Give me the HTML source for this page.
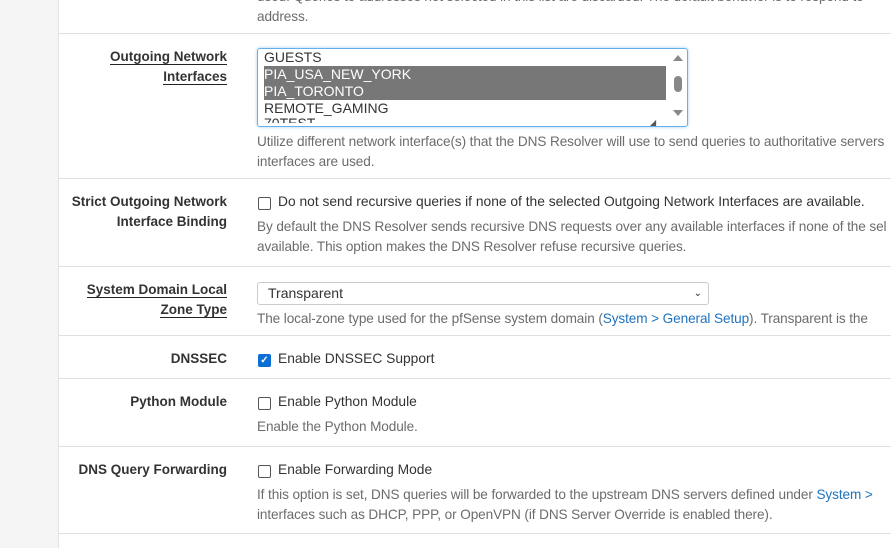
<!DOCTYPE html>
<html><head><meta charset="utf-8"><style>
body{margin:0;width:891px;height:548px;overflow:hidden;background:#fff;font-family:"Liberation Sans",sans-serif;position:relative}
.side{position:absolute;left:0;top:0;width:58px;height:548px;background:#f5f5f5;border-right:1px solid #e2e2e2}
.hr{position:absolute;left:59px;right:0;height:1px;background:#e0e0e0}
.lbl{position:absolute;right:664px;text-align:right;font-size:13.5px;font-weight:bold;color:#333;line-height:20px;white-space:nowrap}
.lbl u{text-decoration:none;border-bottom:1px solid #222}
.t{position:absolute;left:257px;font-size:13.6px;color:#6c6c6c;line-height:20px;white-space:nowrap;letter-spacing:-0.1px}
.c{position:absolute;left:278px;font-size:13.8px;color:#333;line-height:20px;white-space:nowrap}
.cb{position:absolute;left:258px;width:11px;height:11px;border:1px solid #555;border-radius:2px;background:#fff}
a{color:#1e73be;text-decoration:none}
</style></head><body>
<div class="side"></div>
<div class="t" style="top:-13px">used. Queries to addresses not selected in this list are discarded. The default behavior is to respond to</div>
<div class="t" style="top:7px">address.</div>
<div class="hr" style="top:33px"></div>

<div class="lbl" style="top:47px"><u>Outgoing Network</u></div>
<div class="lbl" style="top:67px"><u>Interfaces</u></div>
<div style="position:absolute;left:257px;top:48px;width:429px;height:77px;border:1px solid #66afe9;border-radius:3px;box-shadow:0 0 3px rgba(102,175,233,.6);overflow:hidden;font-size:14px;color:#333;line-height:17px">
<div style="position:absolute;left:6px;top:0">GUESTS</div>
<div style="position:absolute;left:6px;top:17px;width:402px;height:34px;background:#777"></div>
<div style="position:absolute;left:6px;top:17px;color:#fff">PIA_USA_NEW_YORK</div>
<div style="position:absolute;left:6px;top:34px;color:#fff">PIA_TORONTO</div>
<div style="position:absolute;left:6px;top:51px">REMOTE_GAMING</div>
<div style="position:absolute;left:6px;top:66px">70TEST</div>
<div style="position:absolute;left:0;top:74px;width:410px;height:5px;background:#fff"></div>
<div style="position:absolute;left:415px;top:6px;width:0;height:0;border-left:5px solid transparent;border-right:5px solid transparent;border-bottom:6px solid #888"></div>
<div style="position:absolute;left:416px;top:27px;width:8px;height:16px;border-radius:4px;background:#888"></div>
<div style="position:absolute;left:415px;top:61px;width:0;height:0;border-left:5px solid transparent;border-right:5px solid transparent;border-top:6px solid #888"></div>
<div style="position:absolute;left:392px;top:65px;font-size:8px;color:#555">◢</div>
</div>
<div class="t" style="top:132px">Utilize different network interface(s) that the DNS Resolver will use to send queries to authoritative servers</div>
<div class="t" style="top:152px">interfaces are used.</div>
<div class="hr" style="top:178px"></div>

<div class="lbl" style="top:192px">Strict Outgoing Network</div>
<div class="lbl" style="top:212px">Interface Binding</div>
<div class="cb" style="top:197px"></div>
<div class="c" style="top:192px">Do not send recursive queries if none of the selected Outgoing Network Interfaces are available.</div>
<div class="t" style="top:217px">By default the DNS Resolver sends recursive DNS requests over any available interfaces if none of the sel</div>
<div class="t" style="top:237px">available. This option makes the DNS Resolver refuse recursive queries.</div>
<div class="hr" style="top:266px"></div>

<div class="lbl" style="top:280px"><u>System Domain Local</u></div>
<div class="lbl" style="top:300px"><u>Zone Type</u></div>
<div style="position:absolute;left:257px;top:282px;border:1px solid #ccc;border-radius:3px;font-size:14px;color:#333;line-height:21px;padding-left:10px;box-sizing:border-box;width:452px;height:23px">Transparent<span style="position:absolute;right:6px;top:0;font-size:10px">&#8964;</span></div>
<div class="t" style="top:309px">The local-zone type used for the pfSense system domain (<a>System &gt; General Setup</a>). Transparent is the</div>
<div class="hr" style="top:335px"></div>

<div class="lbl" style="top:349px">DNSSEC</div>
<div style="position:absolute;left:258px;top:354px;width:13px;height:13px;border-radius:2px;background:#0b6fd6;color:#fff;font-size:10px;line-height:13px;text-align:center;font-weight:bold">✓</div>
<div class="c" style="top:349px">Enable DNSSEC Support</div>
<div class="hr" style="top:378px"></div>

<div class="lbl" style="top:392px">Python Module</div>
<div class="cb" style="top:397px"></div>
<div class="c" style="top:392px">Enable Python Module</div>
<div class="t" style="top:417px">Enable the Python Module.</div>
<div class="hr" style="top:446px"></div>

<div class="lbl" style="top:460px">DNS Query Forwarding</div>
<div class="cb" style="top:465px"></div>
<div class="c" style="top:460px">Enable Forwarding Mode</div>
<div class="t" style="top:485px">If this option is set, DNS queries will be forwarded to the upstream DNS servers defined under <a>System &gt;</a></div>
<div class="t" style="top:505px">interfaces such as DHCP, PPP, or OpenVPN (if DNS Server Override is enabled there).</div>
<div class="hr" style="top:533px"></div>
</body></html>
